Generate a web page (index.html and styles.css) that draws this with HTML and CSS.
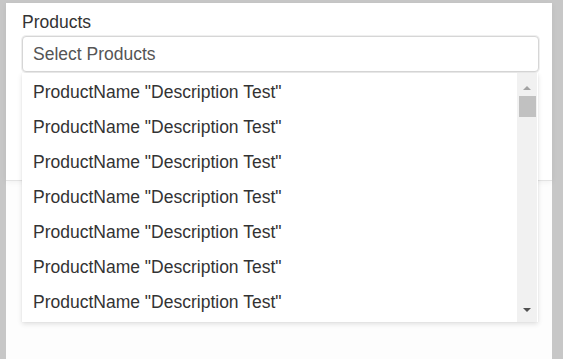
FILE: index.html
```html
<!DOCTYPE html>
<html>
<head>
<meta charset="utf-8">
<link rel="stylesheet" href="styles.css">
</head>
<body>
<div class="panel">
  <div class="card">
    <div class="field">
      <label class="label">Products</label>
      <div class="select">Select Products</div>
      <div class="dropdown">
        <ul class="options">
          <li>ProductName "Description Test"</li>
          <li>ProductName "Description Test"</li>
          <li>ProductName "Description Test"</li>
          <li>ProductName "Description Test"</li>
          <li>ProductName "Description Test"</li>
          <li>ProductName "Description Test"</li>
          <li>ProductName "Description Test"</li>
        </ul>
        <div class="scrollbar">
          <div class="arrow up"></div>
          <div class="thumb"></div>
          <div class="track"></div>
          <div class="arrow down"></div>
        </div>
      </div>
    </div>
  </div>
</div>
</body>
</html>
```
FILE: styles.css
```css
html, body {
  margin: 0;
  padding: 0;
  height: 100%;
}
body {
  background: #c7c7c7;
  font-family: "Liberation Sans", Arial, sans-serif;
  font-size: 17.5px;
  color: #333;
  padding: 3px 11px 0 6px;
  box-sizing: border-box;
  overflow: hidden;
}
.panel {
  background: #fdfdfd;
  height: 100%;
}
.card {
  background: #fff;
  height: 177px;
  box-shadow: 0 1px 0 #e3e3e3, 0 2px 6px rgba(0, 0, 0, 0.06);
  padding: 9px 0 0 16px;
  box-sizing: border-box;
}
.field {
  width: 517px;
}
.label {
  display: block;
  line-height: 21px;
  color: #333;
}
.select {
  margin-top: 3px;
  height: 36px;
  box-sizing: border-box;
  border: 1px solid #d6d6d6;
  border-radius: 4px;
  box-shadow: 0 0 0 1px #efefef;
  padding: 0 10px;
  line-height: 34px;
  color: #555;
  background: #fff;
}
.dropdown {
  position: relative;
  z-index: 2;
  width: 516px;
  margin-top: 1px;
  height: 249px;
  display: flex;
  background: #fff;
  box-shadow: 0 2px 5px rgba(0, 0, 0, 0.12), 0 0 1px rgba(0, 0, 0, 0.08);
  overflow: hidden;
}
.options {
  list-style: none;
  margin: 0;
  padding: 1px 0 0;
  flex: 1;
}
.options li {
  height: 35px;
  line-height: 36px;
  padding-left: 11px;
  color: #333;
  white-space: nowrap;
}
.scrollbar {
  width: 20px;
  margin-right: 1px;
  background: #f1f1f1;
  display: flex;
  flex-direction: column;
  align-items: center;
}
.arrow {
  width: 0;
  height: 0;
  border-left: 4.5px solid transparent;
  border-right: 4.5px solid transparent;
}
.arrow.up {
  margin-top: 13px;
  border-bottom: 4px solid #a3a3a3;
}
.thumb {
  margin-top: 6px;
  width: 17px;
  height: 21px;
  background: #c1c1c1;
}
.track {
  flex: 1;
}
.arrow.down {
  margin-bottom: 10px;
  border-top: 4px solid #505050;
}
```
